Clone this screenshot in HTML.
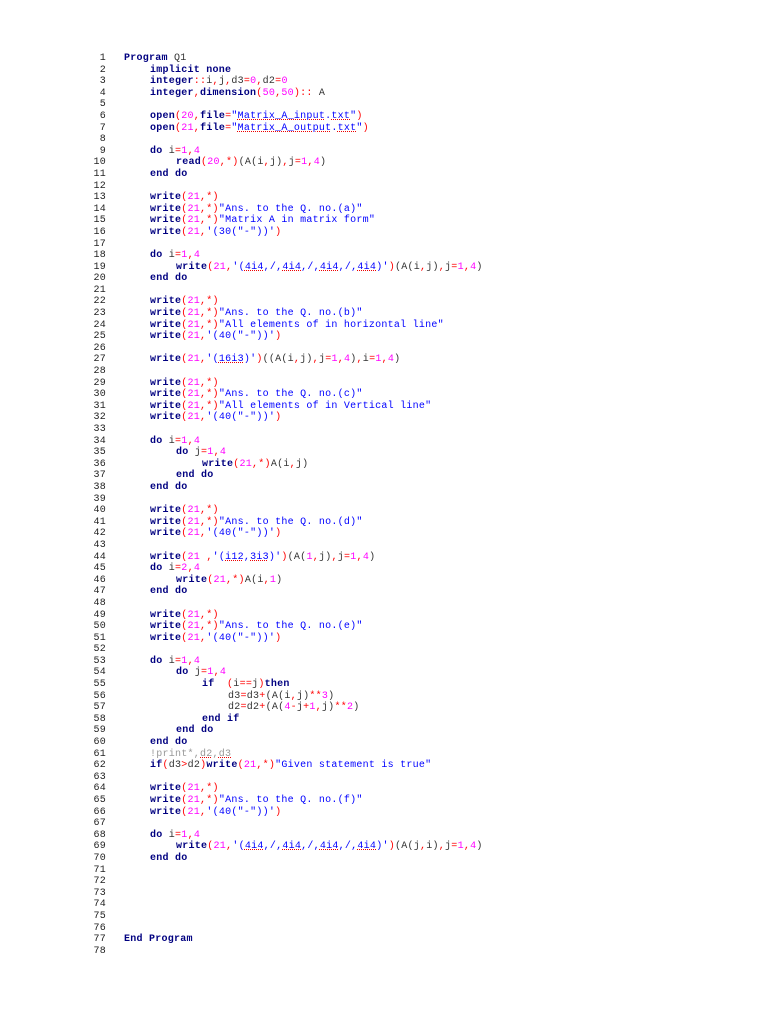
<!DOCTYPE html>
<html><head><meta charset="utf-8"><style>
body{margin:0;background:#fff;width:768px;height:1024px;overflow:hidden;position:relative}
#c{position:absolute;top:53px;left:0;font-family:"Liberation Mono",monospace;font-size:10px;line-height:11.6px;letter-spacing:0.25px;color:#333}
.l{height:11.6px;white-space:pre;position:relative}
.n{position:absolute;left:80px;width:26px;text-align:right;color:#222}
.t{position:absolute;left:124px}
.i1{left:150px}.i2{left:176px}.i3{left:202px}.i4{left:228px}
.k{color:#000080;font-weight:bold}
.m{color:#ff00ff}
.p{color:#ff0000}
.s{color:#0000ff}
.c{color:#999}
.u{text-decoration:underline dotted #e00;text-decoration-thickness:1px}
</style></head><body><div id="c">
<div class="l"><span class="n">1</span><span class="t"><span class="k">Program</span> Q1</span></div>
<div class="l"><span class="n">2</span><span class="t i1"><span class="k">implicit none</span></span></div>
<div class="l"><span class="n">3</span><span class="t i1"><span class="k">integer</span><span class="p">::</span>i<span class="p">,</span>j<span class="p">,</span>d3<span class="p">=</span><span class="m">0</span><span class="p">,</span>d2<span class="p">=</span><span class="m">0</span></span></div>
<div class="l"><span class="n">4</span><span class="t i1"><span class="k">integer</span><span class="p">,</span><span class="k">dimension</span><span class="p">(</span><span class="m">50</span><span class="p">,</span><span class="m">50</span><span class="p">)::</span> A</span></div>
<div class="l"><span class="n">5</span></div>
<div class="l"><span class="n">6</span><span class="t i1"><span class="k">open</span><span class="p">(</span><span class="m">20</span><span class="p">,</span><span class="k">file</span><span class="p">=</span><span class="s">"<span class="u">Matrix_A_input</span>.<span class="u">txt</span>"</span><span class="p">)</span></span></div>
<div class="l"><span class="n">7</span><span class="t i1"><span class="k">open</span><span class="p">(</span><span class="m">21</span><span class="p">,</span><span class="k">file</span><span class="p">=</span><span class="s">"<span class="u">Matrix_A_output</span>.<span class="u">txt</span>"</span><span class="p">)</span></span></div>
<div class="l"><span class="n">8</span></div>
<div class="l"><span class="n">9</span><span class="t i1"><span class="k">do</span> i<span class="p">=</span><span class="m">1</span><span class="p">,</span><span class="m">4</span></span></div>
<div class="l"><span class="n">10</span><span class="t i2"><span class="k">read</span><span class="p">(</span><span class="m">20</span><span class="p">,*)</span>(A(i<span class="p">,</span>j)<span class="p">,</span>j<span class="p">=</span><span class="m">1</span><span class="p">,</span><span class="m">4</span>)</span></div>
<div class="l"><span class="n">11</span><span class="t i1"><span class="k">end do</span></span></div>
<div class="l"><span class="n">12</span></div>
<div class="l"><span class="n">13</span><span class="t i1"><span class="k">write</span><span class="p">(</span><span class="m">21</span><span class="p">,*)</span></span></div>
<div class="l"><span class="n">14</span><span class="t i1"><span class="k">write</span><span class="p">(</span><span class="m">21</span><span class="p">,*)</span><span class="s">"Ans. to the Q. no.(a)"</span></span></div>
<div class="l"><span class="n">15</span><span class="t i1"><span class="k">write</span><span class="p">(</span><span class="m">21</span><span class="p">,*)</span><span class="s">"Matrix A in matrix form"</span></span></div>
<div class="l"><span class="n">16</span><span class="t i1"><span class="k">write</span><span class="p">(</span><span class="m">21</span><span class="p">,</span><span class="s">'(30("-"))'</span><span class="p">)</span></span></div>
<div class="l"><span class="n">17</span></div>
<div class="l"><span class="n">18</span><span class="t i1"><span class="k">do</span> i<span class="p">=</span><span class="m">1</span><span class="p">,</span><span class="m">4</span></span></div>
<div class="l"><span class="n">19</span><span class="t i2"><span class="k">write</span><span class="p">(</span><span class="m">21</span><span class="p">,</span><span class="s">'(<span class="u">4i4</span>,/,<span class="u">4i4</span>,/,<span class="u">4i4</span>,/,<span class="u">4i4</span>)'</span><span class="p">)</span>(A(i<span class="p">,</span>j)<span class="p">,</span>j<span class="p">=</span><span class="m">1</span><span class="p">,</span><span class="m">4</span>)</span></div>
<div class="l"><span class="n">20</span><span class="t i1"><span class="k">end do</span></span></div>
<div class="l"><span class="n">21</span></div>
<div class="l"><span class="n">22</span><span class="t i1"><span class="k">write</span><span class="p">(</span><span class="m">21</span><span class="p">,*)</span></span></div>
<div class="l"><span class="n">23</span><span class="t i1"><span class="k">write</span><span class="p">(</span><span class="m">21</span><span class="p">,*)</span><span class="s">"Ans. to the Q. no.(b)"</span></span></div>
<div class="l"><span class="n">24</span><span class="t i1"><span class="k">write</span><span class="p">(</span><span class="m">21</span><span class="p">,*)</span><span class="s">"All elements of in horizontal line"</span></span></div>
<div class="l"><span class="n">25</span><span class="t i1"><span class="k">write</span><span class="p">(</span><span class="m">21</span><span class="p">,</span><span class="s">'(40("-"))'</span><span class="p">)</span></span></div>
<div class="l"><span class="n">26</span></div>
<div class="l"><span class="n">27</span><span class="t i1"><span class="k">write</span><span class="p">(</span><span class="m">21</span><span class="p">,</span><span class="s">'(<span class="u">16i3</span>)'</span><span class="p">)</span>((A(i<span class="p">,</span>j)<span class="p">,</span>j<span class="p">=</span><span class="m">1</span><span class="p">,</span><span class="m">4</span>)<span class="p">,</span>i<span class="p">=</span><span class="m">1</span><span class="p">,</span><span class="m">4</span>)</span></div>
<div class="l"><span class="n">28</span></div>
<div class="l"><span class="n">29</span><span class="t i1"><span class="k">write</span><span class="p">(</span><span class="m">21</span><span class="p">,*)</span></span></div>
<div class="l"><span class="n">30</span><span class="t i1"><span class="k">write</span><span class="p">(</span><span class="m">21</span><span class="p">,*)</span><span class="s">"Ans. to the Q. no.(c)"</span></span></div>
<div class="l"><span class="n">31</span><span class="t i1"><span class="k">write</span><span class="p">(</span><span class="m">21</span><span class="p">,*)</span><span class="s">"All elements of in Vertical line"</span></span></div>
<div class="l"><span class="n">32</span><span class="t i1"><span class="k">write</span><span class="p">(</span><span class="m">21</span><span class="p">,</span><span class="s">'(40("-"))'</span><span class="p">)</span></span></div>
<div class="l"><span class="n">33</span></div>
<div class="l"><span class="n">34</span><span class="t i1"><span class="k">do</span> i<span class="p">=</span><span class="m">1</span><span class="p">,</span><span class="m">4</span></span></div>
<div class="l"><span class="n">35</span><span class="t i2"><span class="k">do</span> j<span class="p">=</span><span class="m">1</span><span class="p">,</span><span class="m">4</span></span></div>
<div class="l"><span class="n">36</span><span class="t i3"><span class="k">write</span><span class="p">(</span><span class="m">21</span><span class="p">,*)</span>A(i<span class="p">,</span>j)</span></div>
<div class="l"><span class="n">37</span><span class="t i2"><span class="k">end do</span></span></div>
<div class="l"><span class="n">38</span><span class="t i1"><span class="k">end do</span></span></div>
<div class="l"><span class="n">39</span></div>
<div class="l"><span class="n">40</span><span class="t i1"><span class="k">write</span><span class="p">(</span><span class="m">21</span><span class="p">,*)</span></span></div>
<div class="l"><span class="n">41</span><span class="t i1"><span class="k">write</span><span class="p">(</span><span class="m">21</span><span class="p">,*)</span><span class="s">"Ans. to the Q. no.(d)"</span></span></div>
<div class="l"><span class="n">42</span><span class="t i1"><span class="k">write</span><span class="p">(</span><span class="m">21</span><span class="p">,</span><span class="s">'(40("-"))'</span><span class="p">)</span></span></div>
<div class="l"><span class="n">43</span></div>
<div class="l"><span class="n">44</span><span class="t i1"><span class="k">write</span><span class="p">(</span><span class="m">21</span> <span class="p">,</span><span class="s">'(<span class="u">i12</span>,<span class="u">3i3</span>)'</span><span class="p">)</span>(A(<span class="m">1</span><span class="p">,</span>j)<span class="p">,</span>j<span class="p">=</span><span class="m">1</span><span class="p">,</span><span class="m">4</span>)</span></div>
<div class="l"><span class="n">45</span><span class="t i1"><span class="k">do</span> i<span class="p">=</span><span class="m">2</span><span class="p">,</span><span class="m">4</span></span></div>
<div class="l"><span class="n">46</span><span class="t i2"><span class="k">write</span><span class="p">(</span><span class="m">21</span><span class="p">,*)</span>A(i<span class="p">,</span><span class="m">1</span>)</span></div>
<div class="l"><span class="n">47</span><span class="t i1"><span class="k">end do</span></span></div>
<div class="l"><span class="n">48</span></div>
<div class="l"><span class="n">49</span><span class="t i1"><span class="k">write</span><span class="p">(</span><span class="m">21</span><span class="p">,*)</span></span></div>
<div class="l"><span class="n">50</span><span class="t i1"><span class="k">write</span><span class="p">(</span><span class="m">21</span><span class="p">,*)</span><span class="s">"Ans. to the Q. no.(e)"</span></span></div>
<div class="l"><span class="n">51</span><span class="t i1"><span class="k">write</span><span class="p">(</span><span class="m">21</span><span class="p">,</span><span class="s">'(40("-"))'</span><span class="p">)</span></span></div>
<div class="l"><span class="n">52</span></div>
<div class="l"><span class="n">53</span><span class="t i1"><span class="k">do</span> i<span class="p">=</span><span class="m">1</span><span class="p">,</span><span class="m">4</span></span></div>
<div class="l"><span class="n">54</span><span class="t i2"><span class="k">do</span> j<span class="p">=</span><span class="m">1</span><span class="p">,</span><span class="m">4</span></span></div>
<div class="l"><span class="n">55</span><span class="t i3"><span class="k">if</span>  <span class="p">(</span>i<span class="p">==</span>j<span class="p">)</span><span class="k">then</span></span></div>
<div class="l"><span class="n">56</span><span class="t i4">d3<span class="p">=</span>d3<span class="p">+</span>(A(i<span class="p">,</span>j)<span class="p">**</span><span class="m">3</span>)</span></div>
<div class="l"><span class="n">57</span><span class="t i4">d2<span class="p">=</span>d2<span class="p">+</span>(A(<span class="m">4</span><span class="p">-</span>j<span class="p">+</span><span class="m">1</span><span class="p">,</span>j)<span class="p">**</span><span class="m">2</span>)</span></div>
<div class="l"><span class="n">58</span><span class="t i3"><span class="k">end if</span></span></div>
<div class="l"><span class="n">59</span><span class="t i2"><span class="k">end do</span></span></div>
<div class="l"><span class="n">60</span><span class="t i1"><span class="k">end do</span></span></div>
<div class="l"><span class="n">61</span><span class="t i1 c">!print*,<span class="u">d2</span>,<span class="u">d3</span></span></div>
<div class="l"><span class="n">62</span><span class="t i1"><span class="k">if</span><span class="p">(</span>d3<span class="p">&gt;</span>d2<span class="p">)</span><span class="k">write</span><span class="p">(</span><span class="m">21</span><span class="p">,*)</span><span class="s">"Given statement is true"</span></span></div>
<div class="l"><span class="n">63</span></div>
<div class="l"><span class="n">64</span><span class="t i1"><span class="k">write</span><span class="p">(</span><span class="m">21</span><span class="p">,*)</span></span></div>
<div class="l"><span class="n">65</span><span class="t i1"><span class="k">write</span><span class="p">(</span><span class="m">21</span><span class="p">,*)</span><span class="s">"Ans. to the Q. no.(f)"</span></span></div>
<div class="l"><span class="n">66</span><span class="t i1"><span class="k">write</span><span class="p">(</span><span class="m">21</span><span class="p">,</span><span class="s">'(40("-"))'</span><span class="p">)</span></span></div>
<div class="l"><span class="n">67</span></div>
<div class="l"><span class="n">68</span><span class="t i1"><span class="k">do</span> i<span class="p">=</span><span class="m">1</span><span class="p">,</span><span class="m">4</span></span></div>
<div class="l"><span class="n">69</span><span class="t i2"><span class="k">write</span><span class="p">(</span><span class="m">21</span><span class="p">,</span><span class="s">'(<span class="u">4i4</span>,/,<span class="u">4i4</span>,/,<span class="u">4i4</span>,/,<span class="u">4i4</span>)'</span><span class="p">)</span>(A(j<span class="p">,</span>i)<span class="p">,</span>j<span class="p">=</span><span class="m">1</span><span class="p">,</span><span class="m">4</span>)</span></div>
<div class="l"><span class="n">70</span><span class="t i1"><span class="k">end do</span></span></div>
<div class="l"><span class="n">71</span></div>
<div class="l"><span class="n">72</span></div>
<div class="l"><span class="n">73</span></div>
<div class="l"><span class="n">74</span></div>
<div class="l"><span class="n">75</span></div>
<div class="l"><span class="n">76</span></div>
<div class="l"><span class="n">77</span><span class="t"><span class="k">End Program</span></span></div>
<div class="l"><span class="n">78</span></div>
</div></body></html>
